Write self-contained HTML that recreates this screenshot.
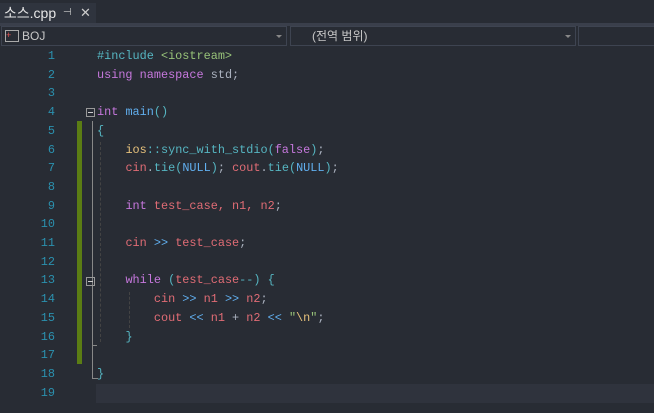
<!DOCTYPE html>
<html><head><meta charset="utf-8"><style>
body{margin:0;width:654px;height:413px;background:#282c34;overflow:hidden;font-family:"Liberation Sans","Noto Sans CJK KR",sans-serif;position:relative}
.tabbar{position:absolute;left:0;top:0;width:654px;height:23px;background:#282c34}
.tab{position:absolute;left:0;top:3px;width:96px;height:20px;background:#2f343e;color:#e6e6e6;font-size:14px;line-height:20px;white-space:nowrap;overflow:hidden}
.line{position:absolute;left:0;top:23px;width:654px;height:3px;background:#3a3f4b}
.nav{position:absolute;top:26px;height:18px;border:1px solid #3e4451;background:#282c34;color:#c8c8c8;font-size:12px;line-height:18px;white-space:nowrap}
.arr{position:absolute;right:4px;top:8px;width:0;height:0;border-left:3px solid transparent;border-right:3px solid transparent;border-top:3px solid #888}
.code{position:absolute;left:0;top:49px;font-family:"Liberation Mono",monospace;font-size:11.85px}
.ln{position:absolute;left:0;width:55px;text-align:right;color:#2b91af}
.tx{position:absolute;left:97px;white-space:pre;color:#abb2bf}
.k{color:#c678dd}.r{color:#e06c75}.f{color:#56b6c2}.g{color:#98c379}.y{color:#e5c07b}.b{color:#61afef}.o{color:#d19a66}
</style></head><body>
<div class="tabbar"><div class="tab">&nbsp;소스.cpp<span style="position:absolute;left:63px;top:0;font-size:10px;color:#ccc">⊣</span><span style="position:absolute;left:80px;top:0;color:#ccc;font-size:13px">✕</span></div></div>
<div class="line"></div>
<div class="nav" style="left:1px;width:284px"><span style="display:inline-block;width:12px;height:10px;border:1px solid #aaa;margin:3px 3px 0 3px;vertical-align:top;color:#e05050;font-size:9px;line-height:9px">+</span>BOJ<div class="arr"></div></div>
<div class="nav" style="left:290px;width:284px"><span style="margin-left:21px">(전역 범위)</span><div class="arr"></div></div>
<div class="nav" style="left:578px;width:80px"></div>
<div style="position:absolute;left:96px;top:384px;width:558px;height:19px;background:#2f333d"></div>
<div style="position:absolute;left:77px;top:121px;width:5px;height:243px;background:#5b7d14"></div>
<div style="position:absolute;left:92px;top:121px;width:1px;height:258px;background:#888"></div>
<div style="position:absolute;left:92px;top:378px;width:6px;height:1px;background:#888"></div>
<div style="position:absolute;left:92px;top:345px;width:5px;height:1px;background:#888"></div>
<div style="position:absolute;left:86px;top:108px;width:9px;height:9px;border:1px solid #999;box-sizing:border-box"><div style="margin:3px 1px;height:1px;background:#ccc"></div></div>
<div style="position:absolute;left:86px;top:277px;width:9px;height:9px;border:1px solid #999;box-sizing:border-box"><div style="margin:3px 1px;height:1px;background:#ccc"></div></div>
<div style="position:absolute;left:100px;top:142px;width:0;height:200px;border-left:1px dashed #444"></div>
<div style="position:absolute;left:129px;top:292px;width:0;height:36px;border-left:1px dashed #444"></div>
<div class="code">
<div class="ln" style="top:0">1</div><div class="tx" style="top:0"><span class="f">#include</span> <span class="g">&lt;iostream&gt;</span></div>
<div class="ln" style="top:18.7px">2</div><div class="tx" style="top:18.7px"><span class="k">using namespace</span> std;</div>
<div class="ln" style="top:37.4px">3</div>
<div class="ln" style="top:56.1px">4</div><div class="tx" style="top:56.1px"><span class="k">int</span> <span class="b">main</span><span class="f">()</span></div>
<div class="ln" style="top:74.8px">5</div><div class="tx" style="top:74.8px"><span class="f">{</span></div>
<div class="ln" style="top:93.5px">6</div><div class="tx" style="top:93.5px">    <span class="y">ios</span><span class="f">::sync_with_stdio(</span><span class="k">false</span><span class="f">)</span>;</div>
<div class="ln" style="top:112.2px">7</div><div class="tx" style="top:112.2px">    <span class="r">cin</span>.<span class="f">tie(</span><span class="b">NULL</span><span class="f">)</span>; <span class="r">cout</span>.<span class="f">tie(</span><span class="b">NULL</span><span class="f">)</span>;</div>
<div class="ln" style="top:130.9px">8</div>
<div class="ln" style="top:149.6px">9</div><div class="tx" style="top:149.6px">    <span class="k">int</span> <span class="r">test_case, n1, n2</span>;</div>
<div class="ln" style="top:168.3px">10</div>
<div class="ln" style="top:187px">11</div><div class="tx" style="top:187px">    <span class="r">cin</span> <span class="b">&gt;&gt;</span> <span class="r">test_case</span>;</div>
<div class="ln" style="top:205.7px">12</div>
<div class="ln" style="top:224.4px">13</div><div class="tx" style="top:224.4px">    <span class="k">while</span> <span class="f">(</span><span class="r">test_case</span><span class="f">--) {</span></div>
<div class="ln" style="top:243.1px">14</div><div class="tx" style="top:243.1px">        <span class="r">cin</span> <span class="b">&gt;&gt;</span> <span class="r">n1</span> <span class="b">&gt;&gt;</span> <span class="r">n2</span>;</div>
<div class="ln" style="top:261.8px">15</div><div class="tx" style="top:261.8px">        <span class="r">cout</span> <span class="b">&lt;&lt;</span> <span class="r">n1</span> + <span class="r">n2</span> <span class="b">&lt;&lt;</span> <span class="g">"</span><span class="y">\n</span><span class="g">"</span>;</div>
<div class="ln" style="top:280.5px">16</div><div class="tx" style="top:280.5px">    <span class="f">}</span></div>
<div class="ln" style="top:299.2px">17</div>
<div class="ln" style="top:317.9px">18</div><div class="tx" style="top:317.9px"><span class="f">}</span></div>
<div class="ln" style="top:336.6px">19</div>
</div>
</body></html>
